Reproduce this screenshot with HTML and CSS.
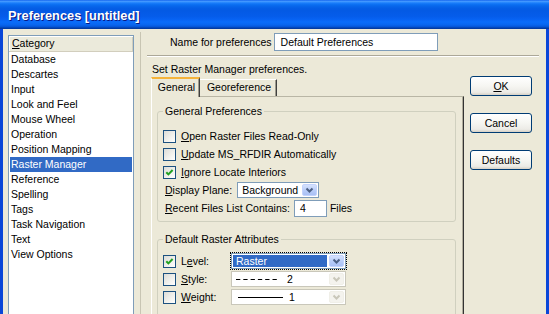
FILE: index.html
```
<!DOCTYPE html>
<html>
<head>
<meta charset="utf-8">
<link rel="stylesheet" href="styles.css">
</head>
<body>
<div class="window">
  <div class="titlebar"><span class="title">Preferences [untitled]</span></div>
  <div class="frame">
    <div class="category">
      <div class="list-header"><u>C</u>ategory</div>
      <ul class="items">
        <li>Database</li>
        <li>Descartes</li>
        <li>Input</li>
        <li>Look and Feel</li>
        <li>Mouse Wheel</li>
        <li>Operation</li>
        <li>Position Mapping</li>
        <li class="selected">Raster Manager</li>
        <li>Reference</li>
        <li>Spelling</li>
        <li>Tags</li>
        <li>Task Navigation</li>
        <li>Text</li>
        <li>View Options</li>
      </ul>
    </div>
    <div class="main">
      <div class="name-row">
        <span class="name-label">Name for preferences</span>
        <div class="textbox name-input">Default Preferences</div>
      </div>
      <div class="separator"></div>
      <div class="content">
        <div class="left-col">
          <div class="intro">Set Raster Manager preferences.</div>
          <div class="tabs">
            <div class="tab tab-active">General</div>
            <div class="tab tab-geo">Georeference</div>
          </div>
          <div class="panel">
            <fieldset class="group group-general">
              <legend>General Preferences</legend>
              <div class="row"><span class="cb"></span><span><u>O</u>pen Raster Files Read-Only</span></div>
              <div class="row"><span class="cb"></span><span><u>U</u>pdate MS_RFDIR Automatically</span></div>
              <div class="row"><span class="cb checked"><svg viewBox="0 0 11 11" width="11" height="11"><polyline points="2.3,5.2 4.4,7.4 8.6,3" fill="none" stroke="#21A121" stroke-width="2"/></svg></span><span><u>I</u>gnore Locate Interiors</span></div>
              <div class="row field-row">
                <span class="field-label"><u>D</u>isplay Plane:</span>
                <div class="combo plane-combo">
                  <span class="combo-text">Background</span>
                  <span class="arrow"><svg viewBox="0 0 13 14" width="13" height="14"><polyline points="3.5,5.5 6.5,8.5 9.5,5.5" fill="none" stroke="#4D6185" stroke-width="2"/></svg></span>
                </div>
              </div>
              <div class="row field-row">
                <span class="field-label"><u>R</u>ecent Files List Contains:</span>
                <div class="textbox recent-input">4</div>
                <span class="files-label">Files</span>
              </div>
            </fieldset>
            <fieldset class="group group-attrs">
              <legend>Default Raster Attributes</legend>
              <div class="row attr-row">
                <span class="cb checked"><svg viewBox="0 0 11 11" width="11" height="11"><polyline points="2.3,5.2 4.4,7.4 8.6,3" fill="none" stroke="#21A121" stroke-width="2"/></svg></span>
                <span class="attr-label">L<u>e</u>vel:</span>
                <div class="combo attr-combo focused">
                  <span class="combo-text selected-text">Raster</span>
                  <span class="arrow"><svg viewBox="0 0 13 14" width="13" height="14"><polyline points="3.5,5.5 6.5,8.5 9.5,5.5" fill="none" stroke="#4D6185" stroke-width="2"/></svg></span>
                </div>
              </div>
              <div class="row attr-row">
                <span class="cb"></span>
                <span class="attr-label"><u>S</u>tyle:</span>
                <div class="combo attr-combo disabled">
                  <span class="combo-text"><svg class="line-sample" viewBox="0 0 42 3" width="42" height="3"><line x1="0" y1="1.5" x2="42" y2="1.5" stroke="#000" stroke-width="1" stroke-dasharray="4.3 3"/></svg><span class="num">2</span></span>
                  <span class="arrow"><svg viewBox="0 0 13 14" width="13" height="14"><polyline points="3.5,5.5 6.5,8.5 9.5,5.5" fill="none" stroke="#C9C7BA" stroke-width="2"/></svg></span>
                </div>
              </div>
              <div class="row attr-row">
                <span class="cb"></span>
                <span class="attr-label"><u>W</u>eight:</span>
                <div class="combo attr-combo disabled">
                  <span class="combo-text"><svg class="line-sample weight" viewBox="0 0 45 3" width="45" height="3"><line x1="0" y1="1.5" x2="45" y2="1.5" stroke="#000" stroke-width="1.2"/></svg><span class="num">1</span></span>
                  <span class="arrow"><svg viewBox="0 0 13 14" width="13" height="14"><polyline points="3.5,5.5 6.5,8.5 9.5,5.5" fill="none" stroke="#C9C7BA" stroke-width="2"/></svg></span>
                </div>
              </div>
            </fieldset>
          </div>
        </div>
        <div class="buttons">
          <div class="btn"><u>O</u>K</div>
          <div class="btn">Cancel</div>
          <div class="btn">Defaults</div>
        </div>
      </div>
    </div>
  </div>
</div>
</body>
</html>
```
FILE: styles.css
```
html, body {
  margin: 0;
  padding: 0;
  width: 549px;
  height: 314px;
  overflow: hidden;
  background: #ECE9D8;
}
body {
  font-family: "Liberation Sans", Arial, sans-serif;
  font-size: 10.5px;
  line-height: 13px;
  color: #000;
}
.window {
  height: 314px;
  display: flex;
  flex-direction: column;
}
.titlebar {
  flex: none;
  height: 29px;
  box-sizing: border-box;
  padding: 1px 0 0 8px;
  display: flex;
  align-items: center;
  background: linear-gradient(to bottom, #0A5CEC 0%, #4A9BFF 4%, #3390FF 7%, #1E80FB 10%, #0E73F5 14%, #0868EC 20%, #055EE6 28%, #045AE4 36%, #055CEA 56%, #0762F2 66%, #0A6DFA 76%, #0865EE 86%, #0556D8 92%, #0344B0 96%, #023498 100%);
}
.title {
  color: #fff;
  font-weight: bold;
  font-size: 12.8px;
  text-shadow: 1px 1px #0A1883;
}
.frame {
  flex: 1;
  min-height: 0;
  display: flex;
  border-left: 3px solid #0A46D8;
  border-right: 3px solid #0A46D8;
  overflow: hidden;
}
.category {
  flex: none;
  width: 126px;
  height: 300px;
  box-sizing: border-box;
  margin: 6px 0 0 5px;
  border: 1px solid #7F9DB9;
  background: #fff;
}
.list-header {
  height: 15px;
  line-height: 15px;
  background: #EBEADB;
  border-bottom: 1px solid #D2CEBD;
  box-shadow: inset 1px 1px #fff, inset -1px 0 #D2CEBD;
  padding-left: 3px;
}
.items {
  list-style: none;
  margin: 0;
  padding: 0;
}
.items li {
  height: 15px;
  line-height: 15px;
  margin: 0 1px;
  padding-left: 1px;
}
.items li.selected {
  background: #316AC5;
  color: #fff;
}
.main {
  flex: 1;
  margin: 3px 0 0 6px;
  border-left: 1px solid #C8C5B3;
  display: flex;
  flex-direction: column;
}
.name-row {
  display: flex;
  align-items: center;
  gap: 2px;
  margin-top: 1px;
  padding-left: 29px;
}
.textbox {
  box-sizing: border-box;
  border: 1px solid #7F9DB9;
  background: #fff;
  display: flex;
  align-items: center;
}
.name-input {
  width: 164px;
  height: 18px;
  padding-left: 6px;
}
.separator {
  margin: 4px 7px 0 6px;
  border-top: 1px solid #ACA899;
  border-bottom: 1px solid #fff;
}
.content {
  display: flex;
  padding-left: 10px;
}
.left-col {
  width: 313px;
  flex: none;
}
.intro {
  margin-top: 6px;
  padding-left: 1px;
}
.tabs {
  display: flex;
  align-items: flex-end;
  margin-top: 1px;
  height: 19px;
  position: relative;
  z-index: 1;
}
.tab {
  box-sizing: border-box;
  height: 17px;
  line-height: 15px;
  border-top: 1px solid #fff;
  border-left: 1px solid #fff;
  border-right: 1px solid #404040;
  box-shadow: inset -1px 0 #9D9A8C;
  text-align: center;
  background: #ECE9D8;
}
.tab-active {
  width: 49px;
  height: 20px;
  margin-bottom: -1px;
  border-top: 2px solid #F5B33B;
  line-height: 16px;
  padding-left: 2px;
}
.tab-geo {
  width: 77px;
  border-left: none;
  padding-left: 2px;
}
.panel {
  box-sizing: border-box;
  height: 230px;
  border-top: 1px solid #B9B6A5;
  border-left: 1px solid #fff;
  border-right: 1px solid #333;
  box-shadow: inset -1px 0 #B0AD9C;
  padding: 8px 7px 0 5px;
}
.group {
  margin: 0;
  border: 1px solid #D0D0BF;
  border-radius: 3px;
  padding: 9px 5px 4px 5px;
  min-width: 0;
}
.group legend {
  padding: 0 2px;
  line-height: 13px;
}
.group-attrs {
  margin-top: 11px;
  padding-top: 6px;
  height: 80px;
}
.row {
  height: 18px;
  display: flex;
  align-items: center;
}
.cb {
  flex: none;
  width: 13px;
  height: 13px;
  box-sizing: border-box;
  border: 1px solid #1C5180;
  background: linear-gradient(135deg, #DCDCD7 0%, #F2F2EE 60%, #FFFFFF 100%);
  margin-right: 5px;
  display: flex;
}
.field-label {
  padding-left: 2px;
}
.combo {
  box-sizing: border-box;
  border: 1px solid #7F9DB9;
  background: #fff;
  display: flex;
  align-items: stretch;
  padding: 1px;
}
.combo-text {
  flex: 1;
  display: flex;
  align-items: center;
  padding-left: 3px;
}
.arrow {
  flex: none;
  width: 15px;
  box-sizing: border-box;
  border: 1px solid #C3D3FD;
  border-radius: 2px;
  background: linear-gradient(to bottom, #D6E2FD 0%, #BACEF9 50%, #A9C0F4 100%);
  display: flex;
  align-items: center;
  justify-content: center;
}
.plane-combo {
  width: 82px;
  height: 16px;
  margin-left: 5px;
}
.recent-input {
  width: 33px;
  height: 17px;
  margin-left: 4px;
  padding-left: 5px;
}
.files-label {
  margin-left: 3px;
}
.attr-label {
  width: 50px;
  flex: none;
}
.attr-combo {
  width: 115px;
  height: 16px;
}
.attr-combo.focused {
  outline: 1px dotted #000;
}
.selected-text {
  background: #316AC5;
  color: #fff;
  margin-right: 2px;
  padding-left: 3px;
}
.attr-combo.disabled {
  border-color: #C9C7BA;
}
.attr-combo.disabled .arrow {
  border-color: #F0EFE8;
  background: #F4F3EE;
}
.line-sample {
  flex: none;
}
.line-sample.weight {
  margin-left: 2px;
}
.num {
  margin-left: 9px;
}
.line-sample.weight + .num {
  margin-left: 6px;
}
.buttons {
  margin-left: 6px;
  padding-top: 19px;
  display: flex;
  flex-direction: column;
  gap: 17px;
}
.btn {
  box-sizing: border-box;
  width: 62px;
  height: 20px;
  border: 1px solid #003C74;
  border-radius: 3px;
  background: linear-gradient(to bottom, #FFFFFF 0%, #F6F6F2 50%, #ECEBE6 85%, #D6D0C5 100%);
  display: flex;
  align-items: center;
  justify-content: center;
}
```
